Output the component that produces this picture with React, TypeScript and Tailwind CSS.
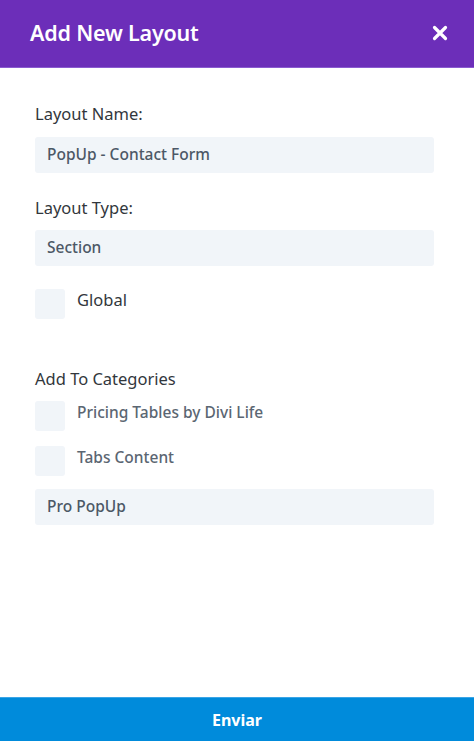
import React from "react";

const font = { fontFamily: '"Noto Sans", "Open Sans", sans-serif' };

function TextInput({ value }: { value: string }) {
  return (
    <div className="h-[36px] w-full rounded-[3px] bg-[#f1f5f9] px-3 flex items-center text-[15.5px] font-medium text-[#4c5866]">
      {value}
    </div>
  );
}

function Check({ label, dark }: { label: string; dark?: boolean }) {
  return (
    <div className="flex items-start gap-[12px]">
      <div className="w-[30px] h-[30px] rounded-[3px] bg-[#f1f5f9] shrink-0" />
      <span
        className={
          dark
            ? "text-[16.5px] font-normal text-[#32373c] leading-[22px]"
            : "text-[15.5px] font-medium text-[#5b6672] leading-[22px]"
        }
      >
        {label}
      </span>
    </div>
  );
}

export default function App() {
  return (
    <div className="w-[474px] h-[741px] bg-white flex flex-col" style={font}>
      {/* Header */}
      <header className="h-[68px] bg-[#6c2eb9] border-b border-[#8a5bd0] flex items-center justify-between pl-[30px] pr-[26px] shrink-0">
        <h1 className="text-white text-[21.5px] font-semibold tracking-[-0.2px]">Add New Layout</h1>
        <svg width="16" height="16" viewBox="0 0 16 16" className="mt-[-1px]">
          <path d="M2.5 2.5 L13.5 13.5 M13.5 2.5 L2.5 13.5" stroke="white" strokeWidth="3.2" strokeLinecap="round" />
        </svg>
      </header>

      {/* Body */}
      <main className="flex-1 px-[35px] pr-[40px] pt-[35px]">
        <label className="block text-[16.5px] text-[#32373c] font-normal leading-[22px]">Layout Name:</label>
        <div className="mt-[12px]">
          <TextInput value="PopUp - Contact Form" />
        </div>

        <label className="block mt-[24px] text-[16.5px] text-[#32373c] font-normal leading-[22px]">Layout Type:</label>
        <div className="mt-[11px]">
          <TextInput value="Section" />
        </div>

        <div className="mt-[23px]">
          <Check label="Global" dark />
        </div>

        <label className="block mt-[49px] text-[16.5px] text-[#32373c] font-normal leading-[22px]">Add To Categories</label>
        <div className="mt-[11px] flex flex-col gap-[15px]">
          <Check label="Pricing Tables by Divi Life" />
          <Check label="Tabs Content" />
        </div>
        <div className="mt-[13px]">
          <TextInput value="Pro PopUp" />
        </div>
      </main>

      {/* Footer */}
      <button className="h-[44px] w-full bg-[#008bdb] border-t border-[#3aa5e6] text-white text-[16px] font-bold shrink-0">
        Enviar
      </button>
    </div>
  );
}
